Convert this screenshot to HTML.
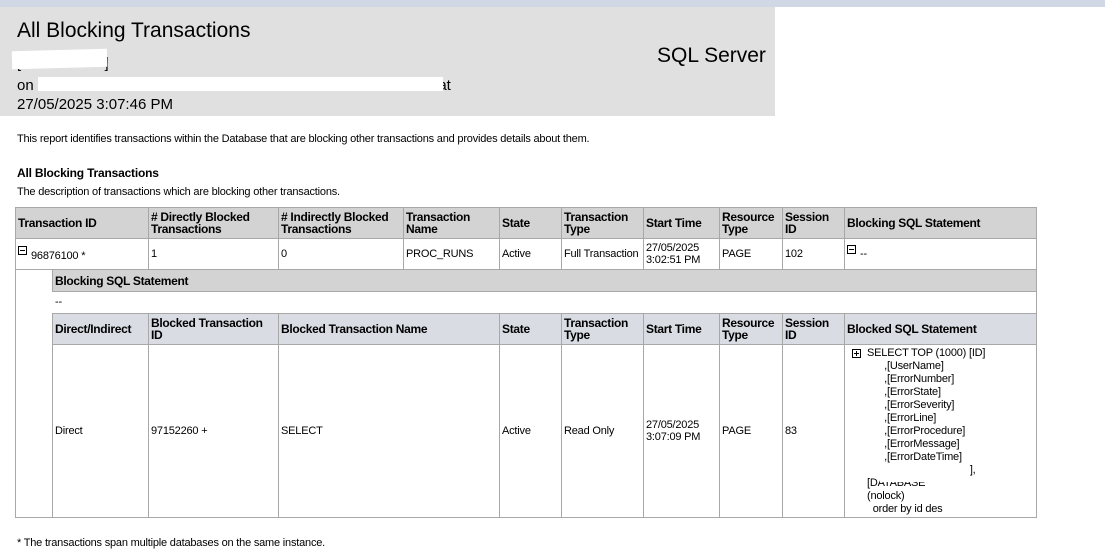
<!DOCTYPE html>
<html><head><meta charset="utf-8"><style>
*{margin:0;padding:0;box-sizing:border-box}
body{width:1105px;height:552px;background:#fff;position:relative;overflow:hidden;font-family:"Liberation Sans",Arial,sans-serif;font-size:11px;color:#000;letter-spacing:-0.2px}
.a{position:absolute}
.c{position:absolute;border:1px solid #a8a8a8;padding:1px 2px;display:flex;align-items:center;line-height:12px;white-space:nowrap}
.h{background:#d3d3d3;font-weight:bold;font-size:12px;letter-spacing:-0.3px}
.b{background:#d9dce3;font-weight:bold;font-size:12px;letter-spacing:-0.3px}
.box{display:inline-block;width:9px;height:9px;border:1px solid #000;position:relative;margin-right:4px;vertical-align:top}
.box:before{content:"";position:absolute;left:1px;right:1px;top:3px;height:1px;background:#000}
.plus:after{content:"";position:absolute;top:1px;bottom:1px;left:3px;width:1px;background:#000}
</style></head><body>
<div class="a" style="left:0;top:0;width:1105px;height:7px;background:#d0d8e6"></div>
<div class="a" style="left:0;top:7px;width:775px;height:109px;background:#e0e0e0"></div>
<div class="a" style="left:17px;top:19px;font-size:21px;letter-spacing:0">All Blocking Transactions</div>
<div class="a" style="left:657px;top:44px;font-size:21px;letter-spacing:0">SQL Server</div>
<div class="a" style="left:17px;top:55px;font-size:15px;letter-spacing:0">[&nbsp;&nbsp;&nbsp;&nbsp;&nbsp;&nbsp;&nbsp;&nbsp;&nbsp;&nbsp;&nbsp;&nbsp;&nbsp;&nbsp;&nbsp;&nbsp;&nbsp;&nbsp;&nbsp;&nbsp;]</div>
<div class="a" style="left:12px;top:50px;width:95px;height:18px;background:#fff;transform:rotate(-1.5deg)"></div>
<div class="a" style="left:17px;top:77px;font-size:15px;letter-spacing:0">on</div>
<div class="a" style="left:430px;top:77px;font-size:15px;letter-spacing:0">t at</div>
<div class="a" style="left:38px;top:77px;width:405px;height:14px;background:#fff"></div>
<div class="a" style="left:17px;top:96px;font-size:15px;letter-spacing:0">27/05/2025 3:07:46 PM</div>
<div class="a" style="left:17px;top:133px">This report identifies transactions within the Database that are blocking other transactions and provides details about them.</div>
<div class="a" style="left:17px;top:166px;font-weight:bold;font-size:12px;letter-spacing:-0.2px">All Blocking Transactions</div>
<div class="a" style="left:17px;top:186px">The description of transactions which are blocking other transactions.</div>

<div class="c h" style="left:15px;top:207px;width:134px;height:32px">Transaction ID</div>
<div class="c h" style="left:148px;top:207px;width:131px;height:32px">#&nbsp;Directly Blocked<br>Transactions</div>
<div class="c h" style="left:278px;top:207px;width:126px;height:32px">#&nbsp;Indirectly Blocked<br>Transactions</div>
<div class="c h" style="left:403px;top:207px;width:97px;height:32px">Transaction<br>Name</div>
<div class="c h" style="left:499px;top:207px;width:63px;height:32px">State</div>
<div class="c h" style="left:561px;top:207px;width:83px;height:32px">Transaction<br>Type</div>
<div class="c h" style="left:643px;top:207px;width:77px;height:32px">Start Time</div>
<div class="c h" style="left:719px;top:207px;width:64px;height:32px">Resource<br>Type</div>
<div class="c h" style="left:782px;top:207px;width:63px;height:32px">Session<br>ID</div>
<div class="c h" style="left:844px;top:207px;width:193px;height:32px">Blocking SQL Statement</div>

<div class="c" style="left:15px;top:238px;width:134px;height:32px;align-items:flex-start;padding-top:7px"><span class="box"></span><span style="padding-top:4px">96876100 *</span></div>
<div class="c" style="left:148px;top:238px;width:131px;height:32px">1</div>
<div class="c" style="left:278px;top:238px;width:126px;height:32px">0</div>
<div class="c" style="left:403px;top:238px;width:97px;height:32px">PROC_RUNS</div>
<div class="c" style="left:499px;top:238px;width:63px;height:32px">Active</div>
<div class="c" style="left:561px;top:238px;width:83px;height:32px">Full Transaction</div>
<div class="c" style="left:643px;top:238px;width:77px;height:32px">27/05/2025<br>3:02:51 PM</div>
<div class="c" style="left:719px;top:238px;width:64px;height:32px">PAGE</div>
<div class="c" style="left:782px;top:238px;width:63px;height:32px">102</div>
<div class="c" style="left:844px;top:238px;width:193px;height:32px;align-items:flex-start;padding-top:6px"><span class="box"></span><span style="padding-top:3px">--</span></div>

<div class="a" style="left:15px;top:269px;width:1px;height:249px;background:#a8a8a8"></div>
<div class="a" style="left:1036px;top:269px;width:1px;height:249px;background:#a8a8a8"></div>
<div class="a" style="left:15px;top:517px;width:1022px;height:1px;background:#a8a8a8"></div>
<div class="c h" style="left:52px;top:269px;width:985px;height:23px">Blocking SQL Statement</div>
<div class="a" style="left:55px;top:296px">--</div>

<div class="c b" style="left:52px;top:313px;width:97px;height:32px">Direct/Indirect</div>
<div class="c b" style="left:148px;top:313px;width:131px;height:32px">Blocked Transaction<br>ID</div>
<div class="c b" style="left:278px;top:313px;width:222px;height:32px">Blocked Transaction Name</div>
<div class="c b" style="left:499px;top:313px;width:63px;height:32px">State</div>
<div class="c b" style="left:561px;top:313px;width:83px;height:32px">Transaction<br>Type</div>
<div class="c b" style="left:643px;top:313px;width:77px;height:32px">Start Time</div>
<div class="c b" style="left:719px;top:313px;width:64px;height:32px">Resource<br>Type</div>
<div class="c b" style="left:782px;top:313px;width:63px;height:32px">Session<br>ID</div>
<div class="c b" style="left:844px;top:313px;width:193px;height:32px">Blocked SQL Statement</div>

<div class="c" style="left:52px;top:344px;width:97px;height:174px">Direct</div>
<div class="c" style="left:148px;top:344px;width:131px;height:174px">97152260 +</div>
<div class="c" style="left:278px;top:344px;width:222px;height:174px">SELECT</div>
<div class="c" style="left:499px;top:344px;width:63px;height:174px">Active</div>
<div class="c" style="left:561px;top:344px;width:83px;height:174px">Read Only</div>
<div class="c" style="left:643px;top:344px;width:77px;height:174px">27/05/2025<br>3:07:09 PM</div>
<div class="c" style="left:719px;top:344px;width:64px;height:174px">PAGE</div>
<div class="c" style="left:782px;top:344px;width:63px;height:174px">83</div>
<div class="c" style="left:844px;top:344px;width:193px;height:174px"></div>
<div class="a" style="left:852px;top:349px"><span class="box plus"></span></div>
<div class="a" style="left:867px;top:347px;line-height:13px;white-space:pre">SELECT TOP (1000) [ID]
      ,[UserName]
      ,[ErrorNumber]
      ,[ErrorState]
      ,[ErrorSeverity]
      ,[ErrorLine]
      ,[ErrorProcedure]
      ,[ErrorMessage]
      ,[ErrorDateTime]
                                    ],
[DATABASE
(nolock)
  order by id des</div>
<div class="a" style="left:880px;top:478px;width:150px;height:4px;background:#fff"></div>
<div class="a" style="left:17px;top:537px">* The transactions span multiple databases on the same instance.</div>
</body></html>
